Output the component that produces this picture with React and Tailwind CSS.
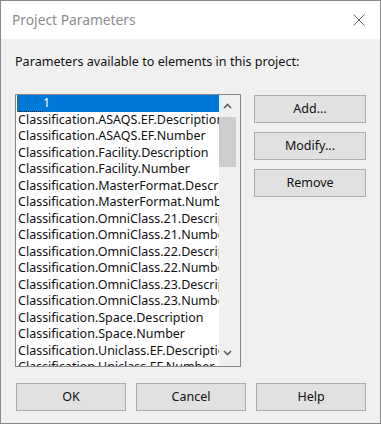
import React from "react";

const items = [
  "Classification.ASAQS.EF.Description",
  "Classification.ASAQS.EF.Number",
  "Classification.Facility.Description",
  "Classification.Facility.Number",
  "Classification.MasterFormat.Description",
  "Classification.MasterFormat.Number",
  "Classification.OmniClass.21.Description",
  "Classification.OmniClass.21.Number",
  "Classification.OmniClass.22.Description",
  "Classification.OmniClass.22.Number",
  "Classification.OmniClass.23.Description",
  "Classification.OmniClass.23.Number",
  "Classification.Space.Description",
  "Classification.Space.Number",
  "Classification.Uniclass.EF.Description",
  "Classification.Uniclass.EF.Number",
];

function Btn({ children, w }) {
  return (
    <div
      className={`${w} h-[28px] border border-[#adadad] bg-[#e1e1e1] flex items-center justify-center text-[12.5px] text-[#111]`}
    >
      {children}
    </div>
  );
}

export default function App() {
  return (
    <div
      className="w-[381px] h-[424px] border border-[#8a8a8a] bg-[#f0f0f0] flex flex-col overflow-hidden"
      style={{ fontFamily: '"Noto Sans", "Segoe UI", sans-serif' }}
    >
      <div className="h-[38px] bg-white flex items-center justify-between pl-[11px] pr-[14px] shrink-0">
        <span className="text-[13.8px] text-[#8c8c8c]">Project Parameters</span>
        <svg width="12" height="12" viewBox="0 0 12 12" className="mr-[1px]">
          <path d="M0.5 0.5 L11.5 11.5 M11.5 0.5 L0.5 11.5" stroke="#666" strokeWidth="1" fill="none" />
        </svg>
      </div>
      <div className="flex flex-col pl-[14px]">
        <div className="mt-[15px] text-[12.6px] leading-[16px] text-[#111]">
          Parameters available to elements in this project:
        </div>
        <div className="flex mt-[24px] gap-[13px]">
          <div className="w-[226px] h-[273px] border border-[#828790] bg-white flex overflow-hidden">
            <div className="flex-1 flex flex-col overflow-hidden pl-[1px]">
              <div className="h-[16.5px] shrink-0 bg-[#0078d7] text-white text-[12.5px] leading-[16.5px] pl-[26px] relative">
                1
                <div className="absolute left-[2px] bottom-0 border-b border-dotted border-[#222] w-[24px]"></div>
              </div>
              {items.map((t) => (
                <div
                  key={t}
                  className="h-[16.5px] shrink-0 text-[12.5px] leading-[16.5px] text-[#111] whitespace-nowrap pl-[1px]"
                >
                  {t}
                </div>
              ))}
            </div>
            <div className="w-[21px] flex flex-col items-start bg-[#f0f0f0] shrink-0">
              <div className="w-[17px] h-[22px] flex items-center justify-center">
                <svg width="9" height="6" viewBox="0 0 9 6">
                  <path d="M1 5 L4.5 1.5 L8 5" stroke="#606060" strokeWidth="1.6" fill="none" />
                </svg>
              </div>
              <div className="w-[17px] h-[50px] bg-[#cdcdcd]"></div>
              <div className="flex-1"></div>
              <div className="w-[17px] h-[22px] flex items-center justify-center mb-[2px]">
                <svg width="9" height="6" viewBox="0 0 9 6">
                  <path d="M1 1 L4.5 4.5 L8 1" stroke="#606060" strokeWidth="1.6" fill="none" />
                </svg>
              </div>
            </div>
          </div>
          <div className="flex flex-col gap-[9px] pt-[1px]">
            <Btn w="w-[112px]">Add...</Btn>
            <Btn w="w-[112px]">Modify...</Btn>
            <Btn w="w-[112px]">Remove</Btn>
          </div>
        </div>
        <div className="flex mt-[16px] gap-[10px] pl-[1px]">
          <Btn w="w-[110px]">OK</Btn>
          <Btn w="w-[110px]">Cancel</Btn>
          <Btn w="w-[110px]">Help</Btn>
        </div>
      </div>
    </div>
  );
}
